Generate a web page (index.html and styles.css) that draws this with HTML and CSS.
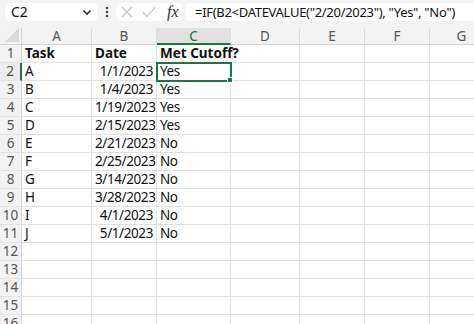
FILE: index.html
```html
<!DOCTYPE html>
<html>
<head>
<meta charset="utf-8">
<link rel="stylesheet" href="styles.css">
</head>
<body>
<div class="toolbar">
  <div class="namebox">
    <span class="name">C2</span>
    <svg class="chev" width="10" height="7" viewBox="0 0 10 7"><path d="M1.5 1.5 L5 5 L8.5 1.5" fill="none" stroke="#333" stroke-width="1.6"/></svg>
  </div>
  <svg class="dots" width="4" height="12" viewBox="0 0 4 12"><circle cx="2" cy="2" r="1.3" fill="#444"/><circle cx="2" cy="6" r="1.3" fill="#444"/><circle cx="2" cy="10" r="1.3" fill="#444"/></svg>
  <div class="btns">
    <svg width="12" height="12" viewBox="0 0 12 12"><path d="M1 1 L11 11 M11 1 L1 11" stroke="#c4c4c4" stroke-width="1.2" fill="none"/></svg>
    <svg width="14" height="12" viewBox="0 0 14 12"><path d="M1 6.5 L5 10.5 L13 1.5" stroke="#c4c4c4" stroke-width="1.2" fill="none"/></svg>
    <span class="fx">fx</span>
  </div>
  <div class="formula">=IF(B2&lt;DATEVALUE("2/20/2023"), "Yes", "No")</div>
</div>
<div class="sheet">
  <div class="corner"><svg width="14" height="14" viewBox="0 0 14 14"><path d="M0 14 L14 14 L14 0 Z" fill="#dadada"/></svg></div>
  <div class="ch">A</div><div class="ch">B</div><div class="ch sel">C</div><div class="ch">D</div><div class="ch">E</div><div class="ch">F</div><div class="ch">G</div>

  <div class="rh">1</div><div class="c b">Task</div><div class="c b">Date</div><div class="c b">Met Cutoff?</div><div class="c"></div><div class="c"></div><div class="c"></div><div class="c"></div>
  <div class="rh rsel">2</div><div class="c">A</div><div class="c r">1/1/2023</div><div class="c active">Yes</div><div class="c"></div><div class="c"></div><div class="c"></div><div class="c"></div>
  <div class="rh">3</div><div class="c">B</div><div class="c r">1/4/2023</div><div class="c">Yes</div><div class="c"></div><div class="c"></div><div class="c"></div><div class="c"></div>
  <div class="rh">4</div><div class="c">C</div><div class="c r">1/19/2023</div><div class="c">Yes</div><div class="c"></div><div class="c"></div><div class="c"></div><div class="c"></div>
  <div class="rh">5</div><div class="c">D</div><div class="c r">2/15/2023</div><div class="c">Yes</div><div class="c"></div><div class="c"></div><div class="c"></div><div class="c"></div>
  <div class="rh">6</div><div class="c">E</div><div class="c r">2/21/2023</div><div class="c">No</div><div class="c"></div><div class="c"></div><div class="c"></div><div class="c"></div>
  <div class="rh">7</div><div class="c">F</div><div class="c r">2/25/2023</div><div class="c">No</div><div class="c"></div><div class="c"></div><div class="c"></div><div class="c"></div>
  <div class="rh">8</div><div class="c">G</div><div class="c r">3/14/2023</div><div class="c">No</div><div class="c"></div><div class="c"></div><div class="c"></div><div class="c"></div>
  <div class="rh">9</div><div class="c">H</div><div class="c r">3/28/2023</div><div class="c">No</div><div class="c"></div><div class="c"></div><div class="c"></div><div class="c"></div>
  <div class="rh">10</div><div class="c">I</div><div class="c r">4/1/2023</div><div class="c">No</div><div class="c"></div><div class="c"></div><div class="c"></div><div class="c"></div>
  <div class="rh">11</div><div class="c">J</div><div class="c r">5/1/2023</div><div class="c">No</div><div class="c"></div><div class="c"></div><div class="c"></div><div class="c"></div>
  <div class="rh">12</div><div class="c"></div><div class="c"></div><div class="c"></div><div class="c"></div><div class="c"></div><div class="c"></div><div class="c"></div>
  <div class="rh">13</div><div class="c"></div><div class="c"></div><div class="c"></div><div class="c"></div><div class="c"></div><div class="c"></div><div class="c"></div>
  <div class="rh">14</div><div class="c"></div><div class="c"></div><div class="c"></div><div class="c"></div><div class="c"></div><div class="c"></div><div class="c"></div>
  <div class="rh">15</div><div class="c"></div><div class="c"></div><div class="c"></div><div class="c"></div><div class="c"></div><div class="c"></div><div class="c"></div>
  <div class="rh">16</div><div class="c"></div><div class="c"></div><div class="c"></div><div class="c"></div><div class="c"></div><div class="c"></div><div class="c"></div>
</div>
</body>
</html>
```
FILE: styles.css
```css
html, body {
  margin: 0;
  padding: 0;
  width: 474px;
  height: 324px;
  overflow: hidden;
  background: #f3f3f3;
  font-family: "Noto Sans", "Open Sans", sans-serif;
  color: #111;
}
.toolbar {
  display: flex;
  align-items: center;
  height: 18px;
  padding: 3px 0 0 5px;
  margin-bottom: 7px;
}
.namebox {
  width: 92px;
  height: 18px;
  background: #fff;
  border-radius: 4px;
  display: flex;
  align-items: center;
  justify-content: space-between;
  padding: 0 5px 0 6px;
  box-sizing: border-box;
}
.name {
  font-size: 14px;
  line-height: 18px;
}
.dots {
  margin-left: 8px;
}
.btns {
  margin-left: 7px;
  width: 66px;
  height: 18px;
  background: #fff;
  border-radius: 4px;
  display: flex;
  align-items: center;
  padding-left: 5px;
  gap: 9px;
  box-sizing: border-box;
}
.fx {
  font-family: "Liberation Serif", "DejaVu Serif", serif;
  font-style: italic;
  font-size: 16px;
  color: #333;
  line-height: 18px;
  margin-left: 2px;
}
.formula {
  flex: 1;
  margin-left: 4px;
  height: 18px;
  background: #fff;
  border-radius: 4px 0 0 4px;
  font-size: 13px;
  letter-spacing: -0.3px;
  line-height: 18px;
  padding-left: 9px;
  white-space: nowrap;
  overflow: hidden;
}
.sheet {
  display: grid;
  grid-template-columns: 22px 70px 65px 74px 69px 65px 65px 64px;
  grid-template-rows: 17px;
  grid-auto-rows: 18px;
  background: #fff;
}
.corner {
  background: #f3f3f3;
  border-right: 1px solid #d4d4d4;
  border-bottom: 1px solid #d4d4d4;
  display: flex;
  align-items: flex-end;
  justify-content: flex-end;
  padding: 0 2px 2px 0;
}
.ch {
  background: #f3f3f3;
  border-right: 1px solid #dcdcdc;
  border-bottom: 1px solid #d4d4d4;
  text-align: center;
  font-size: 13.5px;
  line-height: 17px;
  color: #555;
}
.ch.sel {
  background: #e1e1e1;
  color: #1e6b43;
  border-bottom: 2px solid #217346;
}
.rh {
  background: #f3f3f3;
  border-right: 1px solid #d4d4d4;
  border-bottom: 1px solid #e4e4e4;
  text-align: center;
  font-size: 13.5px;
  line-height: 17px;
  color: #555;
}
.rh.rsel {
  border-right: 2px solid #217346;
  background: #ececec;
}
.c {
  border-right: 1px solid #e2e2e2;
  border-bottom: 1px solid #e2e2e2;
  font-size: 13.5px;
  letter-spacing: -0.4px;
  line-height: 17px;
  padding: 0 3px;
  white-space: nowrap;
  overflow: visible;
}
.c.b {
  font-weight: bold;
  letter-spacing: 0;
}
.c.r {
  text-align: right;
}
.c.active {
  position: relative;
  outline: 2px solid #217346;
  outline-offset: -1px;
  z-index: 1;
}
.c.active::after {
  content: "";
  position: absolute;
  right: -3px;
  bottom: -3px;
  width: 4px;
  height: 4px;
  background: #217346;
  border: 1px solid #fff;
}
```
